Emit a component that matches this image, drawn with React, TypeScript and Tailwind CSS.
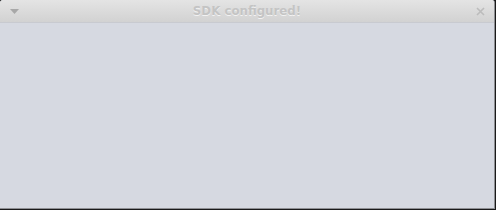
import React from "react";

export default function App() {
  return (
    <div className="w-[496px] h-[210px] bg-[#1a1a1a] flex flex-col overflow-hidden" style={{ fontFamily: '"DejaVu Sans", sans-serif' }}>
      <div className="w-[495px] h-[209px] flex flex-col rounded-tl-[3px] rounded-tr-[3px] overflow-hidden border-r border-b border-[#8e8f93] bg-[#d6d9e1]">
        <div className="h-[23px] shrink-0 flex items-center bg-gradient-to-b from-[#e4e4e4] to-[#d2d2d2] border-b border-[#c8cad0] relative">
          <div className="w-[28px] flex items-center justify-center pt-[1px]">
            <svg width="9" height="6" viewBox="0 0 9 6">
              <path d="M0 0 L9 0 L4.5 5 Z" fill="#a8a8a8" />
            </svg>
          </div>
          <div className="flex-1 text-center text-[11.8px] font-bold text-[#c4c4c4] leading-none pt-[1px] [text-shadow:0_1px_0_#f2f2f2]">
            SDK configured!
          </div>
          <div className="w-[28px] flex items-center justify-center">
            <svg width="9" height="9" viewBox="0 0 9 9">
              <path d="M1 1 L8 8 M8 1 L1 8" stroke="#bcbcbc" strokeWidth="1.6" />
            </svg>
          </div>
        </div>
        <div className="flex-1 bg-[#d6d9e1]" />
      </div>
    </div>
  );
}
